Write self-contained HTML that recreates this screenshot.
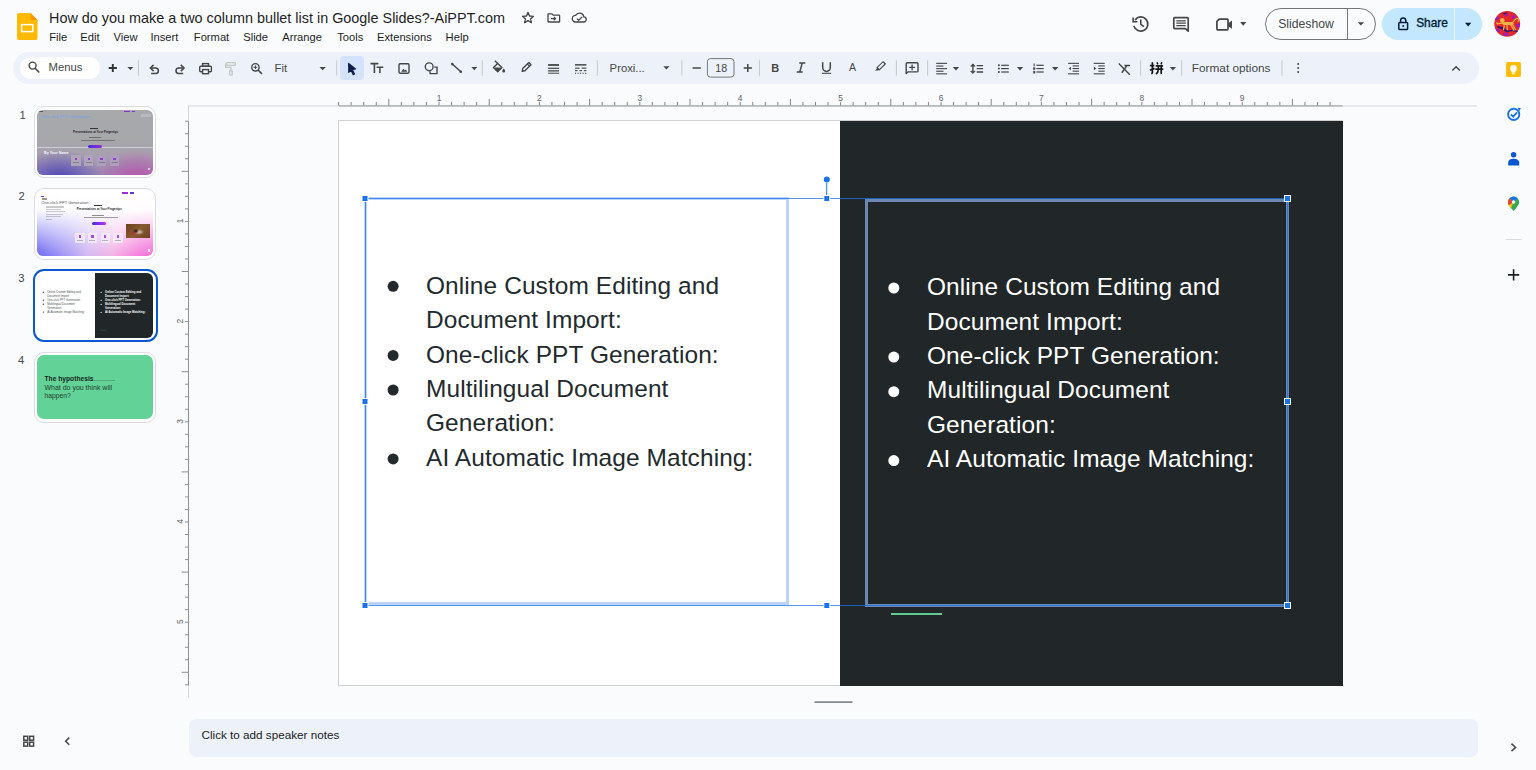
<!DOCTYPE html>
<html><head><meta charset="utf-8">
<style>
*{margin:0;padding:0;box-sizing:border-box}
html,body{width:1536px;height:770px;overflow:hidden;background:#f9fbfd;font-family:"Liberation Sans",sans-serif;color:#1f1f1f}
.a{position:absolute}
.t{position:absolute;white-space:pre;line-height:1}
svg{position:absolute;overflow:visible}
</style></head><body>

<!-- HEADER -->
<svg style="left:17px;top:13px" width="21" height="27" viewBox="0 0 21 27">
 <path d="M2 0H13.5L20.5 7V25A2 2 0 0 1 18.5 27H2A2 2 0 0 1 0 25V2A2 2 0 0 1 2 0Z" fill="#ffba00"/>
 <path d="M13.5 0L20.5 7H13.5Z" fill="#ff9500"/>
 <rect x="4.6" y="11.6" width="11.2" height="7" fill="none" stroke="#fff" stroke-width="1.5"/>
</svg>
<div class="t" style="left:49px;top:10.7px;font-size:14.4px;color:#1f1f1f">How do you make a two column bullet list in Google Slides?-AiPPT.com</div>

<div class="t" style="left:49.2px;top:31.5px;font-size:11.2px">File</div>
<div class="t" style="left:80.3px;top:31.5px;font-size:11.2px">Edit</div>
<div class="t" style="left:113.6px;top:31.5px;font-size:11.2px">View</div>
<div class="t" style="left:150.4px;top:31.5px;font-size:11.2px">Insert</div>
<div class="t" style="left:193.8px;top:31.5px;font-size:11.2px">Format</div>
<div class="t" style="left:243.2px;top:31.5px;font-size:11.2px">Slide</div>
<div class="t" style="left:282.2px;top:31.5px;font-size:11.2px">Arrange</div>
<div class="t" style="left:337.2px;top:31.5px;font-size:11.2px">Tools</div>
<div class="t" style="left:377px;top:31.5px;font-size:11.2px">Extensions</div>
<div class="t" style="left:445.6px;top:31.5px;font-size:11.2px">Help</div>

<div class="a" style="left:1265px;top:8px;width:111px;height:32px;border-radius:16px;border:1px solid #747775"></div>
<div class="a" style="left:1347px;top:8px;width:1px;height:32px;background:#747775"></div>
<div class="t" style="left:1278.2px;top:18.4px;font-size:12.2px;color:#444746">Slideshow</div>
<div class="a" style="left:1382px;top:8px;width:100px;height:32px;border-radius:16px;background:#c2e7ff"></div>
<div class="a" style="left:1454.2px;top:8px;width:1px;height:32px;background:#e8f5ff"></div>
<div class="t" style="left:1416.2px;top:18.3px;font-size:11.9px;color:#001d35;-webkit-text-stroke:0.35px #001d35">Share</div>

<svg style="left:0;top:0" width="1536" height="48" viewBox="0 0 1536 48">
<g fill="none" stroke="#444746" stroke-width="1.3">
 <!-- star -->
 <path d="M528 12.3L529.5 16L533.5 16.3L530.5 18.9L531.4 22.7L528 20.6L524.6 22.7L525.5 18.9L522.5 16.3L526.5 16Z" stroke-linejoin="round"/>
 <!-- folder move -->
 <path d="M548 14V21.4A.6 .6 0 0 0 548.6 22H559A.6 .6 0 0 0 559.6 21.4V15.8A.6 .6 0 0 0 559 15.2H553.2L552 13.8H548.6A.6 .6 0 0 0 548 14.4Z" stroke-linejoin="round"/>
 <path d="M551 18.6H555.6M553.8 16.9L555.6 18.6L553.8 20.3" stroke-width="1.2"/>
 <!-- cloud done -->
 <path d="M575.5 22H583.5A2.6 2.6 0 0 0 583.8 16.8A4.4 4.4 0 0 0 575.6 15.4A3.3 3.3 0 0 0 575.5 22Z" stroke-linejoin="round"/>
 <path d="M576.9 18.6L578.7 20.3L582.2 16.9" stroke-width="1.2"/>
</g>
<g fill="none" stroke="#444746" stroke-width="1.7">
 <!-- history -->
 <path d="M1135 19.9A7.1 7.1 0 1 1 1133.9 25.9"/>
 <path d="M1133.1 17.4V21.7H1137.4" stroke-width="1.6"/>
 <path d="M1140.8 19.6V24.3L1143.9 26.7" stroke-width="1.6"/>
 <!-- comments -->
 <path d="M1174.6 17.6H1187.4A.8 .8 0 0 1 1188.2 18.4V31.2L1185.4 28.6H1174.6A.8 .8 0 0 1 1173.8 27.8V18.4A.8 .8 0 0 1 1174.6 17.6Z" stroke-linejoin="round"/>
 <path d="M1176.3 20.8H1185.8M1176.3 23.2H1185.8M1176.3 25.6H1185.8" stroke-width="1.2"/>
 <!-- camera -->
 <path d="M1219.2 19.1H1227.2A.8 .8 0 0 1 1228 19.9V29.1A.8 .8 0 0 1 1227.2 29.9H1217.7A.8 .8 0 0 1 1216.9 29.1V21.4Z" stroke-linejoin="round"/>
</g>
<g fill="#444746">
 <path d="M1228.2 23.2L1232 20.6V28.8L1228.2 26.2Z"/>
 <path d="M1240.1 22H1246.4L1243.25 25.7Z"/>
 <path d="M1357.7 22.2H1364L1360.85 25.6Z"/>
</g>
<g fill="#001d35">
 <path d="M1465 22.8H1471.3L1468.15 26.5Z"/>
</g>
<g fill="none" stroke="#001d35" stroke-width="1.5">
 <rect x="1398.8" y="22.4" width="8.8" height="7.1" rx=".8"/>
 <path d="M1400.6 22.4V20.6A2.6 2.6 0 0 1 1405.8 20.6V22.4"/>
</g>
<circle cx="1403.2" cy="26" r="1" fill="#001d35"/>
</svg>
<!-- TOOLBAR -->
<div class="a" style="left:13px;top:52px;width:1466px;height:32px;border-radius:16px;background:#edf2fa"></div>
<div class="a" style="left:20px;top:57px;width:80px;height:22px;border-radius:11px;background:#fff"></div>

<div class="a" style="left:340px;top:56px;width:24px;height:24px;border-radius:4px;background:#d3e3fd"></div>
<svg style="left:0;top:0" width="1536" height="100" viewBox="0 0 1536 100">
<g fill="none" stroke="#444746" stroke-width="1.5" stroke-linecap="butt">
 <!-- search -->
 <circle cx="32.6" cy="65.6" r="3.5" stroke-width="1.4"/>
 <path d="M35.2 68.3L39.2 72.6" stroke-width="1.5"/>
 <!-- plus -->
 <path d="M108.7 68H116.9M112.8 64V72" stroke-width="1.9" stroke="#303331"/>
 <!-- undo -->
 <path d="M153.6 64.9L150.4 68L153.6 71.1" stroke-width="1.5"/>
 <path d="M150.6 68H155.6A2.8 2.8 0 0 1 155.6 73.6H151.2" stroke-width="1.5"/>
 <!-- redo -->
 <g transform="matrix(-1 0 0 1 334.4 0)">
 <path d="M153.6 64.9L150.4 68L153.6 71.1" stroke-width="1.5"/>
 <path d="M150.6 68H155.6A2.8 2.8 0 0 1 155.6 73.6H151.2" stroke-width="1.5"/>
 </g>
 <!-- print -->
 <rect x="202.6" y="63.6" width="5.9" height="2.6" stroke-width="1.4"/>
 <rect x="199.7" y="66.2" width="11.7" height="5.6" rx="1" stroke-width="1.4"/>
 <rect x="202.6" y="69.6" width="5.9" height="4.1" fill="#edf2fa" stroke-width="1.4"/>
 <!-- paint format (disabled) -->
 <g stroke="#c4c7c5" stroke-width="1.3">
 <rect x="226.8" y="62.6" width="8.6" height="2.8" rx=".7"/>
 <path d="M226.8 64H225.6V67.4H230.9V70.2"/>
 <rect x="229.7" y="70.6" width="2.5" height="4.6" rx=".5"/>
 </g>
 <!-- zoom -->
 <circle cx="255.4" cy="67.3" r="3.7" stroke-width="1.4"/>
 <path d="M258.1 70L261.9 73.9" stroke-width="1.6"/>
 <path d="M253.6 67.3H257.2M255.4 65.5V69.1" stroke-width="1.1"/>
 <!-- Tt -->
 <path d="M370.5 63.6H378.4M374.4 63.6V72.9" stroke-width="1.6"/>
 <path d="M376.6 67.3H383.3M379.9 67.3V72.9" stroke-width="1.5"/>
 <!-- image -->
 <rect x="399" y="63.8" width="10" height="9.4" rx="1.1" stroke-width="1.4"/>
 <path d="M401.2 71.7L403.4 68.7L404.9 70.5L405.9 69.4L407.2 71.7Z" fill="#444746" stroke="none"/>
 <!-- shapes -->
 <circle cx="429.2" cy="66.8" r="3.9" stroke-width="1.4"/>
 <path d="M434.3 67.1H437V73.6H430.1V71.3" stroke-width="1.4"/>
 <!-- line -->
 <path d="M452.2 64L460.9 71.8" stroke-width="1.5"/>
 <circle cx="452.3" cy="64.1" r="1.3" fill="#444746" stroke="none"/>
 <circle cx="460.8" cy="71.7" r="1.3" fill="#444746" stroke="none"/>
 <!-- pencil -->
 <path d="M522.2 71.3L522.7 68.6L528.8 62.5L531 64.7L524.9 70.8Z" stroke-width="1.4" stroke-linejoin="round"/>
 <path d="M527.3 64L529.5 66.2" stroke-width="1.2"/>
 <!-- comment + -->
 <path d="M906.2 72.5V63.8A1 1 0 0 1 907.2 62.8H917A1 1 0 0 1 918 63.8V70.9A1 1 0 0 1 917 71.9H907.9L906.2 73.6Z" stroke-width="1.4" stroke-linejoin="round"/>
 <path d="M912.1 64.6V70.2M909.3 67.4H914.9" stroke-width="1.3"/>
 <!-- clear formatting -->
 <path d="M1118.8 63.5L1129.8 74.7" stroke-width="1.4"/>
 <path d="M1124.4 65.6H1130M1126.9 65.6L1121.8 72.8" stroke-width="1.5"/>
 <!-- pinyin -->
 <g stroke="#141414" stroke-width="1.7" stroke-linecap="butt">
 <path d="M1149.9 65.6H1154.4"/>
 <path d="M1152.4 62.2V72.6Q1152.4 73.6 1151.2 73.4"/>
 <path d="M1149.9 70.3L1154.6 68.4"/>
 <path d="M1156.9 62.4L1157.9 64.3M1161.9 62.4L1160.9 64.3" stroke-width="1.5"/>
 <path d="M1155.7 65.9H1163"/>
 <path d="M1155.3 69.1H1163.3"/>
 <path d="M1158.3 65.9V69.5Q1158.2 72.6 1155.9 73.9"/>
 <path d="M1161.2 65.9V74"/>
 </g>
 <!-- kebab -->
 <circle cx="1298.2" cy="64.1" r="1" fill="#444746" stroke="none"/>
 <circle cx="1298.2" cy="68.1" r="1" fill="#444746" stroke="none"/>
 <circle cx="1298.2" cy="72.1" r="1" fill="#444746" stroke="none"/>
 <!-- chevron up -->
 <path d="M1452.3 70.6L1456.1 66.7L1459.9 70.6" stroke-width="1.5"/>
 <!-- minus/plus font size -->
 <path d="M692.6 68H700.8" stroke-width="1.5"/>
 <path d="M743.7 68H751.9M747.8 64V72" stroke-width="1.5"/>
 <!-- font size box -->
 <rect x="707.4" y="58.6" width="26.6" height="18.5" rx="3" stroke="#747775" stroke-width="1"/>
 <!-- line spacing -->
 <path d="M972.9 64.3V73.1" stroke-width="1.4"/>
 <path d="M970.6 66.2L972.9 63.8L975.2 66.2Z M970.6 71.2L972.9 73.6L975.2 71.2Z" fill="#444746" stroke-width=".6"/>
 <path d="M976.7 65.6H983.1M976.7 68.7H983.1M976.7 72H983.1" stroke-width="1.3"/>
</g>
<g fill="#444746">
 <!-- dropdown triangles -->
 <path d="M127.4 67H133.3L130.35 70.1Z"/>
 <path d="M319.5 67H325.8L322.65 70.2Z"/>
 <path d="M471.3 67H477.3L474.3 70.3Z"/>
 <path d="M663.3 66.2H669.5L666.4 69.4Z"/>
 <path d="M952.8 67H959.1L955.95 70.4Z"/>
 <path d="M1016.9 67H1023.2L1020.05 70.4Z"/>
 <path d="M1052 67H1058.4L1055.2 70.4Z"/>
 <path d="M1169.8 67H1176L1172.9 70.4Z"/>
 <!-- fill bucket -->
 <path d="M494.9 60.8L497.9 63.8" fill="none" stroke="#444746" stroke-width="1.4"/>
 <path d="M497.7 63.4L501.9 67.6L497.7 71.8L493.5 67.6Z" fill="none" stroke="#444746" stroke-width="1.4" stroke-linejoin="round"/>
 <path d="M493.4 67.6H502L497.7 71.9Z"/>
 <path d="M503.7 68.6C503.7 68.6 502.2 70.3 502.2 71.1A1.5 1.5 0 0 0 505.2 71.1C505.2 70.3 503.7 68.6 503.7 68.6Z"/>
 <!-- border weight -->
 <rect x="548.1" y="64.1" width="10.9" height="1.8"/>
 <rect x="548.1" y="67.7" width="10.9" height="1.2"/>
 <rect x="548.1" y="70.2" width="10.9" height="1.3"/>
 <rect x="548.1" y="72.7" width="10.9" height="1"/>
 <!-- border dash -->
 <rect x="575" y="64.1" width="11.4" height="1.5"/>
 <rect x="575" y="67.6" width="4.6" height="1.1"/><rect x="581.6" y="67.6" width="4.8" height="1.1"/>
 <rect x="575" y="70.1" width="2.6" height="1.1"/><rect x="579.4" y="70.1" width="2.6" height="1.1"/><rect x="583.8" y="70.1" width="2.6" height="1.1"/>
 <rect x="575" y="72.7" width="1.1" height="1.1"/><rect x="577.5" y="72.7" width="1.1" height="1.1"/><rect x="580" y="72.7" width="1.1" height="1.1"/><rect x="582.6" y="72.7" width="1.1" height="1.1"/><rect x="585.2" y="72.7" width="1.1" height="1.1"/>
 <!-- align left -->
 <rect x="936.2" y="62.8" width="10.9" height="1.1"/>
 <rect x="936.2" y="65.5" width="7.3" height="1.1"/>
 <rect x="936.2" y="68.1" width="10.9" height="1.1"/>
 <rect x="936.2" y="70.7" width="7.3" height="1.1"/>
 <rect x="936.2" y="73.3" width="10.9" height="1.1"/>
 <!-- bullets -->
 <circle cx="998.9" cy="65.3" r="1"/><circle cx="998.9" cy="68.6" r="1"/><circle cx="998.9" cy="72" r="1"/>
 <rect x="1001.2" y="64.7" width="7.6" height="1.2"/><rect x="1001.2" y="68" width="7.6" height="1.2"/><rect x="1001.2" y="71.4" width="7.6" height="1.2"/>
 <!-- numbered -->
 <rect x="1033.6" y="63.5" width="1.1" height="2.8"/>
 <rect x="1033.2" y="67.3" width="2" height="2.5"/>
 <rect x="1033.2" y="70.9" width="2" height="2.6"/>
 <rect x="1036.4" y="64.7" width="7.3" height="1.2"/><rect x="1036.4" y="68" width="7.3" height="1.2"/><rect x="1036.4" y="71.4" width="7.3" height="1.2"/>
 <!-- decrease indent -->
 <rect x="1068.1" y="62.8" width="10.9" height="1.1"/>
 <rect x="1072.6" y="65.4" width="6.4" height="1.1"/>
 <rect x="1072.6" y="68" width="6.4" height="1.1"/>
 <rect x="1072.6" y="70.6" width="6.4" height="1.1"/>
 <rect x="1068.1" y="73.3" width="10.9" height="1.1"/>
 <path d="M1071 66.8V70.2L1068.6 68.5Z"/>
 <!-- increase indent -->
 <rect x="1093.7" y="62.8" width="11" height="1.1"/>
 <rect x="1098.3" y="65.4" width="6.4" height="1.1"/>
 <rect x="1098.3" y="68" width="6.4" height="1.1"/>
 <rect x="1098.3" y="70.6" width="6.4" height="1.1"/>
 <rect x="1093.7" y="73.3" width="11" height="1.1"/>
 <path d="M1093.9 66.8V70.2L1096.3 68.5Z"/>
 <!-- highlighter -->
 <path d="M875 70.4L877 68.3L876.4 67.6L882.6 61.4A.8 .8 0 0 1 883.7 61.4L885.6 63.3A.8 .8 0 0 1 885.6 64.4L879.4 70.6L878.7 70L878.3 70.4Z"/>
 <path d="M877.9 67.6L882.9 62.6L884.4 64.1L879.4 69.1Z" fill="#edf2fa"/>
 <!-- cursor -->
 <path d="M348.6 63.4L355.6 69L352.3 69.5L354.5 74L353.2 74.7L351 70.2L348.8 72.4Z" fill="#0b1d48" stroke="#0b1d48" stroke-width="1.1" stroke-linejoin="round"/>
</g>
<g fill="#444746" style="font-family:'Liberation Sans'">
 <text x="771.2" y="72.1" font-size="11" font-weight="700">B</text>
 
 <text x="849" y="70.5" font-size="10.5">A</text>
 
</g>
<g stroke="#444746" fill="none">
 <!-- italic I -->
 <path d="M799.3 62.9H805.3M796.7 72.1H802.7M802.3 62.9L799.7 72.1" stroke-width="1.5"/>
 <!-- underline U -->
 <path d="M822.7 62.3V67.6A3.8 3.8 0 0 0 830.3 67.6V62.3" stroke-width="1.5"/>
 <path d="M822 73.3H831" stroke-width="1.1"/>
</g>
<g stroke="#c7c7c7" stroke-width="1">
 <path d="M138.5 60.3V75.7M336.7 60.3V75.7M482.3 60.3V75.7M597.4 60.3V75.7M681.9 60.3V75.7M759.4 60.3V75.7M896.4 60.3V75.7M927.6 60.3V75.7M1140.6 60.3V75.7M1181.6 60.3V75.7M1282 60.3V75.7"/>
</g>
</svg>
<div class="t" style="left:48.5px;top:61.7px;font-size:11.3px;color:#444746">Menus</div>
<div class="t" style="left:274.5px;top:62.6px;font-size:11.3px;color:#444746">Fit</div>
<div class="t" style="left:609.6px;top:62.6px;font-size:11.3px;color:#444746">Proxi...</div>
<div class="t" style="left:715.3px;top:63.1px;font-size:10.7px;color:#444746">18</div>
<div class="t" style="left:1191.8px;top:62.6px;font-size:11.8px;color:#444746">Format options</div>

<!-- FILMSTRIP -->
<div class="t" style="left:19.5px;top:109.6px;font-size:11.2px;color:#444746">1</div>
<div class="t" style="left:18.4px;top:191.4px;font-size:11.2px;color:#444746">2</div>
<div class="t" style="left:18.2px;top:273.1px;font-size:11.2px;color:#444746">3</div>
<div class="t" style="left:18.1px;top:354.8px;font-size:11.2px;color:#444746">4</div>

<!-- thumb 1 -->
<div class="a" style="left:34px;top:106.3px;width:122px;height:71.6px;border-radius:10px;background:#fff;border:1px solid #dadce0"></div>
<div class="a" style="left:37.3px;top:109.8px;width:115.9px;height:65px;border-radius:6px;overflow:hidden;background:
radial-gradient(ellipse 45px 30px at 22px 70px, rgba(72,62,182,0.95), rgba(72,62,182,0) 100%),
radial-gradient(ellipse 45px 28px at 100px 68px, rgba(185,80,170,0.9), rgba(185,80,170,0) 100%),
linear-gradient(#a7a9ab 0%, #a6a7aa 45%, #a89faf 70%, #9c8cb4 100%)">
 <div class="t" style="left:3.7px;top:4.9px;font-size:4.27px;color:#6f9fee">One-click PPT Generation</div>
 <div class="a" style="left:103.5px;top:4.3px;width:10px;height:3px;background:#b9b9be"></div>
 <div class="a" style="left:87px;top:0.8px;width:6px;height:1.5px;background:#8a2bd8"></div>
 <div class="a" style="left:94.5px;top:0.8px;width:3px;height:1.5px;background:#6a3bd8"></div>
 <div class="a" style="left:53px;top:18.2px;width:8px;height:1.4px;background:#333"></div>
 <div class="t" style="left:35.7px;top:21.4px;font-size:2.95px;font-weight:700;color:#1f1f24">Presentations at Your Fingertips</div>
 <div class="a" style="left:52px;top:27.5px;width:12px;height:1px;background:#444;opacity:.6"></div>
 <div class="a" style="left:44px;top:30px;width:34px;height:1px;background:#444;opacity:.5"></div>
 <div class="a" style="left:0;top:37.5px;width:116px;height:.8px;background:rgba(235,240,250,.55)"></div>
 <div class="a" style="left:50.5px;top:35.2px;width:14.7px;height:3.3px;border-radius:2px;background:linear-gradient(90deg,#3f2fd9,#9b2ed8)"></div>
 <div class="t" style="left:6.8px;top:41.9px;font-size:3.64px;font-weight:700;color:#f6f4fa">By Your Name</div>
 <div class="a" style="left:33.7px;top:45.7px;width:9.6px;height:10.1px;background:#aea6b8"></div>
 <div class="a" style="left:46.7px;top:45.7px;width:9.5px;height:10.1px;background:#aea6b8"></div>
 <div class="a" style="left:59.7px;top:45.7px;width:9.3px;height:10.1px;background:#ab9fbd"></div>
 <div class="a" style="left:72.7px;top:45.7px;width:9.3px;height:10.1px;background:#ab9fbd"></div>
<div class="a" style="left:37.3px;top:48px;width:2.4px;height:2.6px;background:#8e2fd6;opacity:.85"></div><div class="a" style="left:35.5px;top:52.4px;width:6px;height:.9px;background:#333;opacity:.35"></div><div class="a" style="left:50.3px;top:48px;width:2.4px;height:2.6px;background:#8e2fd6;opacity:.85"></div><div class="a" style="left:48.5px;top:52.4px;width:6px;height:.9px;background:#333;opacity:.35"></div><div class="a" style="left:63.1px;top:48px;width:2.4px;height:2.6px;background:#8e2fd6;opacity:.85"></div><div class="a" style="left:61.3px;top:52.4px;width:6px;height:.9px;background:#333;opacity:.35"></div><div class="a" style="left:76.1px;top:48px;width:2.4px;height:2.6px;background:#8e2fd6;opacity:.85"></div><div class="a" style="left:74.3px;top:52.4px;width:6px;height:.9px;background:#333;opacity:.35"></div><div class="a" style="left:1px;top:.8px;width:5px;height:1.4px;background:#222;opacity:.6"></div><div class="a" style="left:111px;top:58px;width:2px;height:2.5px;background:#f0f0f0;opacity:.7"></div>
</div>

<!-- thumb 2 -->
<div class="a" style="left:34px;top:188.2px;width:122px;height:71.4px;border-radius:10px;background:#fff;border:1px solid #dadce0"></div>
<div class="a" style="left:37px;top:191.3px;width:116.2px;height:64.9px;border-radius:6px;overflow:hidden;background:
linear-gradient(to bottom, #fff 0%, rgba(255,255,255,.97) 30%, rgba(255,255,255,.55) 62%, rgba(255,255,255,0) 100%),
linear-gradient(100deg, #5550ef 0%, #8e86f4 22%, #d2b8f2 48%, #f3b3e6 68%, #f47fdc 88%, #f56bd7 100%)">
 <div class="a" style="left:3.5px;top:4.5px;width:3px;height:1.4px;background:#6c4ae0"></div>
 <div class="a" style="left:85px;top:0.8px;width:6px;height:1.5px;background:#a22be0"></div>
 <div class="a" style="left:93px;top:0.8px;width:4px;height:1.5px;background:#5a3ae0"></div>
 <div class="a" style="left:4.6px;top:7.2px;width:5px;height:1.2px;background:#555;opacity:.6"></div>
 <div class="t" style="left:4.3px;top:9.9px;font-size:4.05px;color:#555">One-click PPT Generation:</div>
 <div class="a" style="left:8.5px;top:15.2px;width:18px;height:1.2px;background:#555;opacity:.3"></div>
 <div class="a" style="left:8.5px;top:17.5px;width:15px;height:1.2px;background:#555;opacity:.3"></div>
 <div class="a" style="left:8.5px;top:20px;width:19px;height:1.2px;background:#555;opacity:.3"></div>
 <div class="a" style="left:8.5px;top:22.7px;width:17px;height:1.2px;background:#555;opacity:.3"></div>
 <div class="a" style="left:8.5px;top:25px;width:15px;height:1.2px;background:#555;opacity:.3"></div>
 <div class="a" style="left:8.5px;top:27.8px;width:6px;height:1.2px;background:#555;opacity:.3"></div>
 <div class="a" style="left:57px;top:13.4px;width:8px;height:1.4px;background:#333"></div>
 <div class="t" style="left:39.7px;top:17.1px;font-size:2.95px;font-weight:700;color:#1f1f24">Presentations at Your Fingertips</div>
 <div class="a" style="left:55px;top:23.3px;width:12px;height:1px;background:#444;opacity:.6"></div>
 <div class="a" style="left:47px;top:25.5px;width:34px;height:1px;background:#444;opacity:.5"></div>
 <div class="a" style="left:54.7px;top:30.8px;width:14.7px;height:3.4px;border-radius:2px;background:linear-gradient(90deg,#3f2fe9,#c32ee8)"></div>
 <div class="a" style="left:89.2px;top:32.7px;width:23.8px;height:13.8px;background:radial-gradient(ellipse 3px 2.5px at 10px 7px,#1a1410,rgba(26,20,16,0) 100%),radial-gradient(ellipse 5px 3px at 13px 8px,#d8d0c8,rgba(216,208,200,0) 100%),radial-gradient(ellipse 4px 2.5px at 8px 9px,#b83030,rgba(184,48,48,0) 100%),linear-gradient(135deg,#6a4020,#8a5a30 50%,#6a4422)"></div>
 <div class="a" style="left:38px;top:41.7px;width:9.6px;height:10.1px;background:#f4eefa;opacity:.8"></div>
 <div class="a" style="left:50.7px;top:41.7px;width:9.5px;height:10.1px;background:#f4eefa;opacity:.8"></div>
 <div class="a" style="left:63.7px;top:41.7px;width:9.3px;height:10.1px;background:#f4eefa;opacity:.8"></div>
 <div class="a" style="left:76.3px;top:41.7px;width:9.3px;height:10.1px;background:#f4eefa;opacity:.8"></div>
<div class="a" style="left:41.6px;top:44px;width:2.4px;height:2.6px;background:#9b2fe0;opacity:.85"></div><div class="a" style="left:39.8px;top:48.4px;width:6px;height:.9px;background:#333;opacity:.3"></div><div class="a" style="left:54.2px;top:44px;width:2.4px;height:2.6px;background:#9b2fe0;opacity:.85"></div><div class="a" style="left:52.4px;top:48.4px;width:6px;height:.9px;background:#333;opacity:.3"></div><div class="a" style="left:67.1px;top:44px;width:2.4px;height:2.6px;background:#9b2fe0;opacity:.85"></div><div class="a" style="left:65.3px;top:48.4px;width:6px;height:.9px;background:#333;opacity:.3"></div><div class="a" style="left:79.7px;top:44px;width:2.4px;height:2.6px;background:#9b2fe0;opacity:.85"></div><div class="a" style="left:77.9px;top:48.4px;width:6px;height:.9px;background:#333;opacity:.3"></div><div class="a" style="left:111px;top:58px;width:2px;height:2.5px;background:#fff;opacity:.8"></div>
</div>

<!-- thumb 3 (selected) -->
<div class="a" style="left:32.6px;top:268.6px;width:125px;height:73.4px;border-radius:11px;background:#fff;border:2.6px solid #0b57d0"></div>
<div class="a" style="left:37.2px;top:273px;width:116px;height:64.8px;border-radius:6px;overflow:hidden;background:#fff">
 <div class="a" style="left:58px;top:0;width:58px;height:65px;background:#212729"></div>
 <div class="a" style="left:0;top:0;width:1004px;height:566px;transform:scale(0.11554);transform-origin:0 0">
  <div class="a" style="left:88px;top:147.8px;font-size:24.45px;line-height:34.4px;color:#4a4f52;white-space:pre">Online Custom Editing and
Document Import:
One-click PPT Generation:
Multilingual Document
Generation:
AI Automatic Image Matching:</div>
  <div class="a" style="left:588.5px;top:149.3px;font-size:24.45px;line-height:34.4px;font-weight:700;color:#fff;white-space:pre">Online Custom Editing and
Document Import:
One-click PPT Generation:
Multilingual Document
Generation:
AI Automatic Image Matching:</div>
  <svg style="left:0;top:0" width="1004" height="566"><g fill="#222a2d"><circle cx="55" cy="166" r="5.5"/><circle cx="55" cy="235" r="5.5"/><circle cx="55" cy="269.5" r="5.5"/><circle cx="55" cy="338.5" r="5.5"/></g><g fill="#fff"><circle cx="555" cy="167.5" r="5.5"/><circle cx="555" cy="236.5" r="5.5"/><circle cx="555" cy="271" r="5.5"/><circle cx="555" cy="340" r="5.5"/></g><rect x="552" y="492.5" width="52" height="3" fill="#3d8f66"/></svg>
 </div>
</div>

<!-- thumb 4 -->
<div class="a" style="left:34px;top:351.5px;width:122px;height:71px;border-radius:10px;background:#fff;border:1px solid #dadce0"></div>
<div class="a" style="left:37.2px;top:354.6px;width:116px;height:64.9px;border-radius:7px;overflow:hidden;background:#62d296">
 <div class="t" style="left:7.3px;top:21.1px;font-size:6.7px;font-weight:700;color:#17251d">The hypothesis</div>
 <div class="a" style="left:57.2px;top:25px;width:21px;height:1.6px;background:#17251d;opacity:.22"></div>
 <div class="t" style="left:7.2px;top:29.3px;font-size:7px;color:#17251d;opacity:.85">What do you think will</div>
 <div class="t" style="left:7.2px;top:38.6px;font-size:6.8px;color:#17251d;opacity:.85">happen?</div>
</div>


<!-- RULERS / CANVAS -->
<svg style="left:0;top:0" width="1536" height="770" viewBox="0 0 1536 770">
<path d="M1342.6 106H1477" stroke="#e1e3e6" stroke-width="1.5" fill="none"/>
<path d="M188 105.9H338.6" stroke="#dcdee1" stroke-width="1.3" fill="none"/>
<path d="M188.5 105.5V121M188.5 685.6V697.5" stroke="#d6d8da" stroke-width="1" fill="none"/>
<path d="M338.6 105.9H1342.6" stroke="#b5b8b8" stroke-width="1.8" fill="none"/>
<path d="M338.60 105.5V101.90M351.15 105.5V101.90M363.70 105.5V101.90M376.25 105.5V101.90M388.80 105.5V98.90M401.35 105.5V101.90M413.90 105.5V101.90M426.45 105.5V101.90M439.00 105.5V101.90M451.55 105.5V101.90M464.10 105.5V101.90M476.65 105.5V101.90M489.20 105.5V98.90M501.75 105.5V101.90M514.30 105.5V101.90M526.85 105.5V101.90M539.40 105.5V101.90M551.95 105.5V101.90M564.50 105.5V101.90M577.05 105.5V101.90M589.60 105.5V98.90M602.15 105.5V101.90M614.70 105.5V101.90M627.25 105.5V101.90M639.80 105.5V101.90M652.35 105.5V101.90M664.90 105.5V101.90M677.45 105.5V101.90M690.00 105.5V98.90M702.55 105.5V101.90M715.10 105.5V101.90M727.65 105.5V101.90M740.20 105.5V101.90M752.75 105.5V101.90M765.30 105.5V101.90M777.85 105.5V101.90M790.40 105.5V98.90M802.95 105.5V101.90M815.50 105.5V101.90M828.05 105.5V101.90M840.60 105.5V101.90M853.15 105.5V101.90M865.70 105.5V101.90M878.25 105.5V101.90M890.80 105.5V98.90M903.35 105.5V101.90M915.90 105.5V101.90M928.45 105.5V101.90M941.00 105.5V101.90M953.55 105.5V101.90M966.10 105.5V101.90M978.65 105.5V101.90M991.20 105.5V98.90M1003.75 105.5V101.90M1016.30 105.5V101.90M1028.85 105.5V101.90M1041.40 105.5V101.90M1053.95 105.5V101.90M1066.50 105.5V101.90M1079.05 105.5V101.90M1091.60 105.5V98.90M1104.15 105.5V101.90M1116.70 105.5V101.90M1129.25 105.5V101.90M1141.80 105.5V101.90M1154.35 105.5V101.90M1166.90 105.5V101.90M1179.45 105.5V101.90M1192.00 105.5V98.90M1204.55 105.5V101.90M1217.10 105.5V101.90M1229.65 105.5V101.90M1242.20 105.5V101.90M1254.75 105.5V101.90M1267.30 105.5V101.90M1279.85 105.5V101.90M1292.40 105.5V98.90M1304.95 105.5V101.90M1317.50 105.5V101.90M1330.05 105.5V101.90" stroke="#85888b" stroke-width="1" fill="none"/>
<path d="M188.5 121.2V685.6M188.5 121.20H185.10M188.5 133.72H185.10M188.5 146.25H185.10M188.5 158.78H185.10M188.5 171.30H181.70M188.5 183.82H185.10M188.5 196.35H185.10M188.5 208.88H185.10M188.5 221.40H185.10M188.5 233.93H185.10M188.5 246.45H185.10M188.5 258.98H185.10M188.5 271.50H181.70M188.5 284.03H185.10M188.5 296.55H185.10M188.5 309.07H185.10M188.5 321.60H185.10M188.5 334.12H185.10M188.5 346.65H185.10M188.5 359.18H185.10M188.5 371.70H181.70M188.5 384.23H185.10M188.5 396.75H185.10M188.5 409.27H185.10M188.5 421.80H185.10M188.5 434.32H185.10M188.5 446.85H185.10M188.5 459.38H185.10M188.5 471.90H181.70M188.5 484.43H185.10M188.5 496.95H185.10M188.5 509.48H185.10M188.5 522.00H185.10M188.5 534.52H185.10M188.5 547.05H185.10M188.5 559.58H185.10M188.5 572.10H181.70M188.5 584.62H185.10M188.5 597.15H185.10M188.5 609.68H185.10M188.5 622.20H185.10M188.5 634.73H185.10M188.5 647.25H185.10M188.5 659.78H185.10M188.5 672.30H181.70M188.5 684.83H185.10" stroke="#8d9095" stroke-width="1" fill="none"/>
<g font-family="Liberation Sans" font-size="8.4" fill="#5f6368"><text x="439.00" y="100.7" text-anchor="middle">1</text><text x="539.40" y="100.7" text-anchor="middle">2</text><text x="639.80" y="100.7" text-anchor="middle">3</text><text x="740.20" y="100.7" text-anchor="middle">4</text><text x="840.60" y="100.7" text-anchor="middle">5</text><text x="941.00" y="100.7" text-anchor="middle">6</text><text x="1041.40" y="100.7" text-anchor="middle">7</text><text x="1141.80" y="100.7" text-anchor="middle">8</text><text x="1242.20" y="100.7" text-anchor="middle">9</text><text transform="translate(183.2 220.90) rotate(-90)" x="0" y="0" text-anchor="middle">1</text><text transform="translate(183.2 321.10) rotate(-90)" x="0" y="0" text-anchor="middle">2</text><text transform="translate(183.2 421.30) rotate(-90)" x="0" y="0" text-anchor="middle">3</text><text transform="translate(183.2 521.50) rotate(-90)" x="0" y="0" text-anchor="middle">4</text><text transform="translate(183.2 621.70) rotate(-90)" x="0" y="0" text-anchor="middle">5</text></g>
</svg>

<!-- SLIDE -->
<div class="a" style="left:338px;top:120px;width:1005px;height:566px;background:#fff;border:1px solid #d0d2d1"></div>
<div class="a" style="left:840px;top:120.5px;width:502.5px;height:565px;background:#212729"></div>

<div class="a" style="left:364px;top:197px;width:424.5px;height:407.5px;border:3px solid #bcd3f8"></div>
<div class="a" style="left:864.5px;top:199px;width:424.7px;height:407.5px;border:3px solid #6b87b2"></div>
<div class="a" style="left:890.7px;top:613px;width:51.5px;height:2px;background:#5fcb8e"></div>
<div class="a" style="left:426px;top:268.7px;font-size:24.45px;line-height:34.4px;letter-spacing:0.1px;color:#222a2d;white-space:pre">Online Custom Editing and
Document Import:
One-click PPT Generation:
Multilingual Document
Generation:
AI Automatic Image Matching:</div>
<div class="a" style="left:927px;top:270.2px;font-size:24.45px;line-height:34.4px;letter-spacing:0.1px;color:#ffffff;white-space:pre">Online Custom Editing and
Document Import:
One-click PPT Generation:
Multilingual Document
Generation:
AI Automatic Image Matching:</div>
<svg style="left:0;top:0" width="1536" height="770" viewBox="0 0 1536 770">
<g fill="#222a2d">
 <circle cx="393.1" cy="286.3" r="5.5"/>
 <circle cx="393.1" cy="355.4" r="5.5"/>
 <circle cx="393.1" cy="390" r="5.5"/>
 <circle cx="393.1" cy="458.9" r="5.5"/>
</g>
<g fill="#ffffff">
 <circle cx="893.8" cy="288" r="5.5"/>
 <circle cx="893.8" cy="357.1" r="5.5"/>
 <circle cx="893.8" cy="391.7" r="5.5"/>
 <circle cx="893.8" cy="460.6" r="5.5"/>
</g>
<g fill="none" stroke="#1a73e8" stroke-opacity="0.75" stroke-width="1">
 <path d="M365 198.5H1287.5M365 605.5H1287.5M365.5 198V605.5M1287.5 198V605.5"/>
</g>
<path d="M826.6 182.8V195" stroke="#4d90f0" stroke-width="1.3"/>
<circle cx="826.8" cy="179.5" r="3" fill="#1a73e8"/>
<g fill="#1a73e8" stroke="#ffffff" stroke-width="1">
 <rect x="362" y="195.5" width="6" height="6"/>
 <rect x="823.8" y="195.5" width="6" height="6"/>
 <rect x="1284.5" y="195.5" width="6" height="6"/>
 <rect x="362" y="398.5" width="6" height="6"/>
 <rect x="1284.5" y="398.5" width="6" height="6"/>
 <rect x="362" y="602.5" width="6" height="6"/>
 <rect x="823.8" y="602.5" width="6" height="6"/>
 <rect x="1284.5" y="602.5" width="6" height="6"/>
</g>
</svg>

<!-- NOTES -->
<div class="a" style="left:189px;top:719px;width:1289px;height:38px;border-radius:7px;background:#edf2fa"></div>
<div class="t" style="left:201.5px;top:729.4px;font-size:11.7px;color:#1b1b1b">Click to add speaker notes</div>

<svg style="left:0;top:0" width="1536" height="770" viewBox="0 0 1536 770">
 <!-- slide resize handle -->
 <rect x="814.5" y="701.3" width="38" height="1.6" fill="#7b7e82"/>
 <!-- grid view -->
 <g fill="none" stroke="#444746" stroke-width="1.5">
  <rect x="23.8" y="736.3" width="3.9" height="3.9"/>
  <rect x="29.7" y="736.3" width="3.9" height="3.9"/>
  <rect x="23.8" y="742.2" width="3.9" height="3.9"/>
  <rect x="29.7" y="742.2" width="3.9" height="3.9"/>
  <path d="M69.3 737.6L65.6 741.2L69.3 744.8" stroke-width="1.5"/>
  <path d="M1511.5 743.6L1515.6 747.4L1511.5 751.1" stroke-width="1.5"/>
 </g>
 <!-- keep -->
 <rect x="1506.1" y="62" width="14.8" height="15" rx="1.6" fill="#fbbc04"/>
 <circle cx="1513.5" cy="68.4" r="3.3" fill="#fff"/>
 <rect x="1511.6" y="70.2" width="3.8" height="2.4" fill="#fff"/>
 <rect x="1511.9" y="73.3" width="3.2" height="1" fill="#fff"/>
 <!-- tasks -->
 <circle cx="1513.7" cy="114.4" r="5.6" fill="none" stroke="#1a73e8" stroke-width="1.9"/>
 <path d="M1510.9 114.3L1513.2 116.6L1517 112.3" fill="none" stroke="#1a73e8" stroke-width="1.8"/>
 <path d="M1517.5 107.8L1521 108.2L1519.2 111.3Z" fill="#1a73e8"/>
 <!-- contacts -->
 <circle cx="1513.6" cy="154.7" r="2.7" fill="#0b57d0"/>
 <path d="M1508.2 165.5V162.6C1508.2 160.2 1510.6 158.8 1513.6 158.8C1516.6 158.8 1519.2 160.2 1519.2 162.6V165.5Z" fill="#0b57d0"/>
 <!-- maps -->
 <path d="M1513.6 211C1513.6 211 1508 205 1508 202.2A5.6 5.6 0 0 1 1519.2 202.2C1519.2 205 1513.6 211 1513.6 211Z" fill="#34a853"/>
 <path d="M1509.5 198.3A5.6 5.6 0 0 1 1517.5 198.1L1513.6 202.2Z" fill="#1a73e8"/>
 <path d="M1509.5 198.3L1513.6 202.2L1508.6 205.2C1508.2 204.2 1508 203 1508 202.2C1508 200.7 1508.6 199.3 1509.5 198.3Z" fill="#ea4335"/>
 <path d="M1508.6 205.2L1513.6 202.2L1511 208.2Z" fill="#fbbc04"/>
 <circle cx="1513.6" cy="202" r="1.8" fill="#fff"/>
 <!-- separator -->
 <rect x="1505.6" y="239" width="16" height="1" fill="#dadce0"/>
 <!-- plus -->
 <path d="M1508 274.9H1519.2M1513.6 269.3V280.5" stroke="#1f1f1f" stroke-width="1.6"/>
 <!-- avatar -->
 <defs><clipPath id="av"><circle cx="1507.2" cy="23.8" r="12.9"/></clipPath></defs>
 <g clip-path="url(#av)">
  <rect x="1494" y="10" width="27" height="28" fill="#e5262b"/>
  <path d="M1494 19L1498 16L1500 18L1496 21Z M1504 14.5L1508 13.5L1509 15.5L1505 16.5Z M1511 16L1515 15L1516 18L1512 19Z M1516 24L1521 23L1521 28L1516 27Z M1496 29L1499 28.5L1500 32L1496 32Z M1503 33L1508 32.5L1509 36L1503 36Z" fill="#a21faa"/>
  <path d="M1497 26L1503 27L1508 30.5L1513 29.5L1519 31.5L1519 32.5L1512 31L1507 32.5L1501 29L1497 27.5Z M1502 13.5L1506 12.5L1508 13L1504 14.5Z" fill="#3b1570"/>
  <g fill="none" stroke="#eab441" stroke-linecap="round">
   <path d="M1504 23.5L1512 23.6" stroke-width="3.2"/>
   <path d="M1504.3 26L1503.5 29.5M1507 25.5L1507.2 29.8M1511 25L1513.8 30.2M1512.8 25L1515.5 29.5" stroke-width="1.3"/>
   <path d="M1503 23L1497.4 23.8L1496.8 22.8" stroke-width="1.3"/>
   <path d="M1512.5 22.5C1514.5 21 1515 18.5 1517.2 18.3C1519 18.2 1519.5 20.5 1518 21.4" stroke-width="1.2"/>
  </g>
  <circle cx="1502.3" cy="20.4" r="2.4" fill="#eab441"/>
 </g>
</svg>
</body></html>
